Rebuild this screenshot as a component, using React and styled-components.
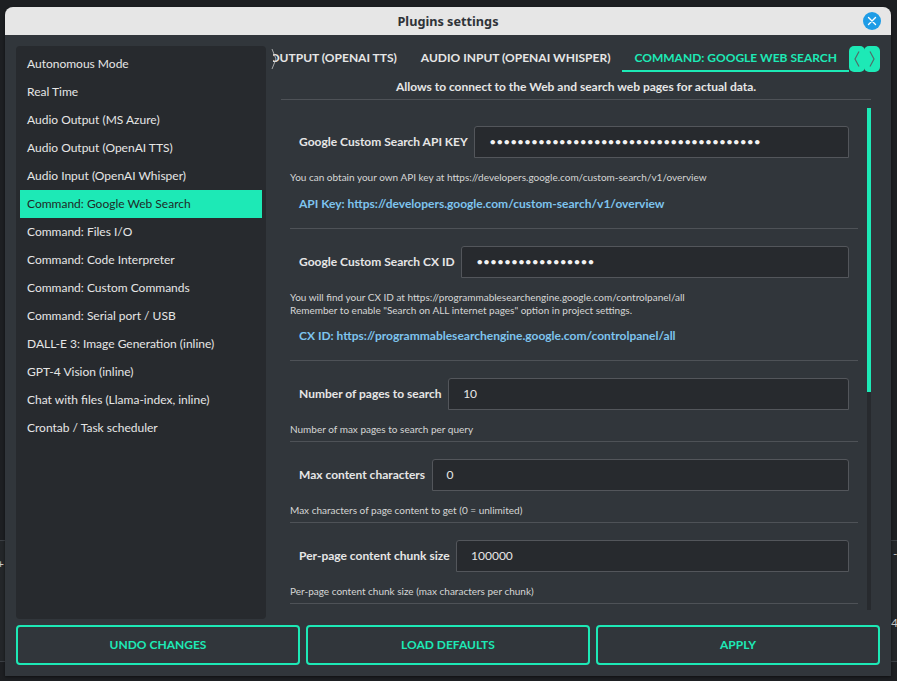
import React from "react";
import styled, { createGlobalStyle } from "styled-components";

const Global = createGlobalStyle`
  html, body { margin: 0; padding: 0; width: 897px; height: 681px; overflow: hidden; background: #1d1f22; }
  * { box-sizing: border-box; }
  body { font-family: Lato, "Open Sans", sans-serif; color: #e6e6e6; }
`;

const Desktop = styled.div`
  position: relative;
  width: 897px;
  height: 681px;
  padding: 7px 6px 5px 5px;
  background: #1d1f22;
`;
const BackBand = styled.div`
  position: absolute;
  left: 0;
  right: 0;
  top: 540px;
  height: 122px;
  background: #232629;
  border-top: 1px solid #3c4045;
  border-bottom: 1px solid #3c4045;
`;
const BackGlyph = styled.span`
  position: absolute;
  left: ${p => p.$left}px;
  top: ${p => p.$top}px;
  font-size: 12px;
  line-height: 14px;
  color: #c8c8c8;
`;
const Dialog = styled.div`
  position: relative;
  height: 669px;
  display: flex;
  flex-direction: column;
  background: #31363b;
  border-radius: 8px 8px 0 0;
  overflow: hidden;
  box-shadow: 0 1px 3px rgba(0,0,0,.5);
`;
const TitleBar = styled.header`
  flex: 0 0 28px;
  display: flex;
  align-items: center;
  justify-content: center;
  position: relative;
  background: #e6e6e6;
  color: #2f3338;
  font-family: "Noto Sans", sans-serif;
  font-size: 12.7px;
  font-weight: 700;
`;
const CloseButton = styled.button`
  position: absolute;
  right: 10px;
  top: 5px;
  width: 18px;
  height: 18px;
  padding: 0;
  border: 0;
  border-radius: 50%;
  background: #1e9ce6;
  display: flex;
  align-items: center;
  justify-content: center;
`;
const Main = styled.div`
  flex: 1;
  display: flex;
  min-height: 0;
  padding: 11px 11px 0 11px;
`;
const Sidebar = styled.nav`
  flex: 0 0 250px;
  height: 573px;
  padding: 4px;
  background: #272a2e;
  border-radius: 4px;
`;
const SideItem = styled.div`
  height: 28px;
  padding: 0 0 2px 7px;
  display: flex;
  align-items: center;
  font-size: 12px;
  color: ${p => (p.$active ? "#1f2a28" : "#e6e6e6")};
  background: ${p => (p.$active ? "#1de9b6" : "transparent")};
`;
const Panel = styled.section`
  flex: 1;
  min-width: 0;
  display: flex;
  flex-direction: column;
`;
const TabRow = styled.div`
  position: relative;
  display: flex;
  height: 26px;
  padding-left: 7px;
`;
const TabStrip = styled.div`
  flex: 0 0 576px;
  display: flex;
  justify-content: flex-end;
  overflow: hidden;
`;
const Tab = styled.div`
  flex: none;
  height: 26px;
  padding: 0 12px 2px;
  display: flex;
  align-items: center;
  justify-content: center;
  font-size: 12px;
  font-weight: 700;
  text-transform: uppercase;
  color: ${p => (p.$active ? "#1de9b6" : "#e6e6e6")};
  border-bottom: 2px solid ${p => (p.$active ? "#1de9b6" : "transparent")};
`;
const LeftCue = styled.svg`
  position: absolute;
  left: 5px;
  top: 2px;
  width: 6px;
  height: 22px;
`;
const NavButton = styled.button`
  flex: 0 0 16px;
  height: 26px;
  padding: 0;
  border: 0;
  border-radius: 5px;
  background: #1de9b6;
  display: flex;
  align-items: center;
  justify-content: center;
  & + & { margin-left: -1px; }
`;
const Intro = styled.div`
  margin: 0 9px 0 15px;
  height: 28px;
  padding-top: 1px;
  display: flex;
  align-items: center;
  justify-content: center;
  font-size: 12px;
  font-weight: 700;
  border-bottom: 1px solid #4e5257;
`;
const ScrollArea = styled.div`
  position: relative;
  height: 502px;
  margin: 8px 9px 0 0;
  padding: 0 13px 0 24px;
  overflow: hidden;
`;
const Track = styled.div`
  position: absolute;
  top: 0;
  right: 0;
  width: 4px;
  height: 100%;
  background: #272a2e;
`;
const Thumb = styled.div`
  height: 284px;
  background: #1de9b6;
`;
const Option = styled.div`
  padding-top: ${p => p.$pt}px;
  padding-bottom: ${p => p.$pb}px;
  border-bottom: 1px solid #4e5257;
`;
const FieldRow = styled.div`
  display: flex;
  align-items: center;
  padding-left: 9px;
  margin-right: 9px;
  gap: 6.5px;
`;
const Label = styled.label`
  flex: none;
  padding-bottom: 2px;
  font-size: 12px;
  font-weight: 700;
  white-space: nowrap;
`;
const Field = styled.div`
  flex: 1;
  height: 32px;
  padding: 0 0 2px 14px;
  display: flex;
  align-items: center;
  background: #272a2e;
  border: 1px solid #53565b;
  border-radius: 3px 3px 0 0;
  font-size: 12px;
  color: #e6e6e6;
`;
const Masked = styled.span`
  font-size: 12px;
  color: #f2f2f2;
`;
const Desc = styled.p`
  margin: 13px 0 0;
  font-size: 10px;
  line-height: 13px;
  color: #d6d6d6;
`;
const LinkText = styled.a`
  display: block;
  margin: ${p => p.$mt}px 0 0 9px;
  font-size: 12px;
  line-height: 14px;
  font-weight: 700;
  color: #7ec4ee;
  text-decoration: none;
`;
const Footer = styled.footer`
  display: grid;
  grid-template-columns: repeat(3, 284px);
  gap: 6px;
  padding: 6px 11px 11px;
`;
const ActionButton = styled.button`
  height: 40px;
  padding: 0 0 2px;
  background: transparent;
  border: 2px solid #1de9b6;
  border-radius: 4px;
  color: #1de9b6;
  font-family: inherit;
  font-size: 12px;
  font-weight: 700;
  text-transform: uppercase;
`;

const plugins = [
  "Autonomous Mode", "Real Time", "Audio Output (MS Azure)", "Audio Output (OpenAI TTS)",
  "Audio Input (OpenAI Whisper)", "Command: Google Web Search", "Command: Files I/O",
  "Command: Code Interpreter", "Command: Custom Commands", "Command: Serial port / USB",
  "DALL-E 3: Image Generation (inline)", "GPT-4 Vision (inline)",
  "Chat with files (Llama-index, inline)", "Crontab / Task scheduler",
];

const Chev = ({ d }) => (
  <svg width="8" height="18" viewBox="0 0 8 18" fill="none" stroke="#4f6f6a" strokeWidth="1.2">
    <path d={d} />
  </svg>
);

export default function App() {
  return (
    <Desktop>
      <Global />
      <BackBand />
      <BackGlyph $left={-3} $top={557}>+</BackGlyph>
      <BackGlyph $left={893} $top={547}>-</BackGlyph>
      <BackGlyph $left={891} $top={616}>4</BackGlyph>
      <Dialog>
        <TitleBar>
          Plugins settings
          <CloseButton aria-label="Close">
            <svg width="10" height="10" viewBox="0 0 10 10" stroke="#fff" strokeWidth="1.4" strokeLinecap="round">
              <path d="M1.5 1.5l7 7M8.5 1.5l-7 7" />
            </svg>
          </CloseButton>
        </TitleBar>
        <Main>
          <Sidebar>
            {plugins.map((p, i) => <SideItem key={p} $active={i === 5}>{p}</SideItem>)}
          </Sidebar>
          <Panel>
            <TabRow>
              <TabStrip>
                <Tab>Audio Output (OpenAI TTS)</Tab>
                <Tab>Audio Input (OpenAI Whisper)</Tab>
                <Tab $active>Command: Google Web Search</Tab>
              </TabStrip>
              <LeftCue viewBox="0 0 6 22" fill="none" stroke="#c8c8c8" strokeWidth="0.8">
                <path d="M1 1l4 10-4 10" />
              </LeftCue>
              <NavButton aria-label="Previous"><Chev d="M6 1.5L2 9l4 7.5" /></NavButton>
              <NavButton aria-label="Next"><Chev d="M2 1.5L6 9l-4 7.5" /></NavButton>
            </TabRow>
            <Intro>Allows to connect to the Web and search web pages for actual data.</Intro>
            <ScrollArea>
              <Track><Thumb /></Track>
              <Option $pt={18} $pb={17}>
                <FieldRow>
                  <Label>Google Custom Search API KEY</Label>
                  <Field><Masked>{"•".repeat(39)}</Masked></Field>
                </FieldRow>
                <Desc>You can obtain your own API key at https://developers.google.com/custom-search/v1/overview</Desc>
                <LinkText $mt={13}>API Key: https://developers.google.com/custom-search/v1/overview</LinkText>
              </Option>
              <Option $pt={17} $pb={17}>
                <FieldRow>
                  <Label>Google Custom Search CX ID</Label>
                  <Field><Masked>{"•".repeat(17)}</Masked></Field>
                </FieldRow>
                <Desc>You will find your CX ID at https://programmablesearchengine.google.com/controlpanel/all<br />Remember to enable "Search on ALL internet pages" option in project settings.</Desc>
                <LinkText $mt={12}>CX ID: https://programmablesearchengine.google.com/controlpanel/all</LinkText>
              </Option>
              <Option $pt={17} $pb={5}>
                <FieldRow>
                  <Label>Number of pages to search</Label>
                  <Field>10</Field>
                </FieldRow>
                <Desc>Number of max pages to search per query</Desc>
              </Option>
              <Option $pt={17} $pb={5}>
                <FieldRow>
                  <Label>Max content characters</Label>
                  <Field>0</Field>
                </FieldRow>
                <Desc>Max characters of page content to get (0 = unlimited)</Desc>
              </Option>
              <Option $pt={17} $pb={5}>
                <FieldRow>
                  <Label>Per-page content chunk size</Label>
                  <Field>100000</Field>
                </FieldRow>
                <Desc>Per-page content chunk size (max characters per chunk)</Desc>
              </Option>
            </ScrollArea>
          </Panel>
        </Main>
        <Footer>
          <ActionButton>Undo changes</ActionButton>
          <ActionButton>Load defaults</ActionButton>
          <ActionButton>Apply</ActionButton>
        </Footer>
      </Dialog>
    </Desktop>
  );
}
